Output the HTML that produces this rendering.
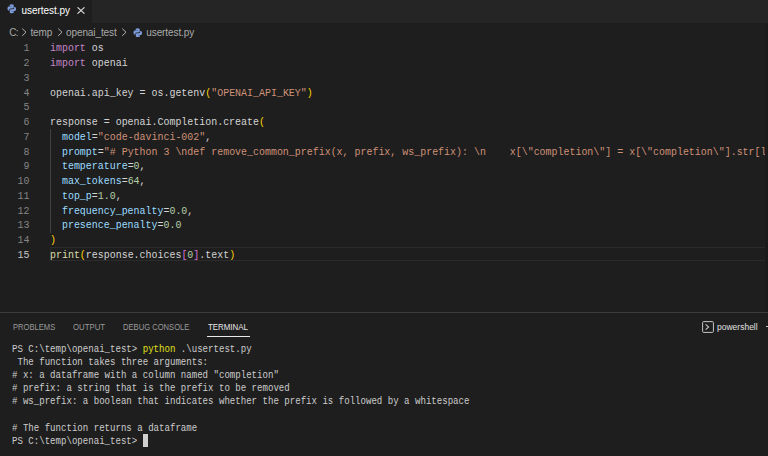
<!DOCTYPE html>
<html><head><meta charset="utf-8">
<style>
*{margin:0;padding:0;box-sizing:border-box}
html,body{width:768px;height:456px;overflow:hidden;background:#1e1e1e}
body{position:relative;font-family:"Liberation Sans",sans-serif}
.abs{position:absolute}
.ln{position:absolute;left:0;width:29.5px;text-align:right;font-family:"Liberation Mono",monospace;font-size:11px;line-height:14.76px;white-space:pre;transform:scaleX(0.9045);transform-origin:right}
.line{position:absolute;left:50.0px;font-family:"Liberation Mono",monospace;font-size:11px;line-height:14.76px;color:#d4d4d4;white-space:pre;transform:scaleX(0.9045);transform-origin:left}
.k{color:#c586c8}.s{color:#ce9178}.n{color:#b5cea8}.p{color:#9cdcfe}.f{color:#dcdcaa}.y{color:#ffd700}.m{color:#da70d6}
.ptab{position:absolute;top:319.5px;font-size:9px;line-height:14px;color:#9a9a9a;white-space:nowrap;transform-origin:left}
.term{position:absolute;left:12.3px;font-family:"Liberation Mono",monospace;font-size:10px;line-height:13.13px;color:#cccccc;white-space:pre;transform:scaleX(0.9075);transform-origin:left}
.yl{color:#e0e01c}
.crumb{position:absolute;top:26px;font-size:10px;line-height:13px;color:#a9a9a9;white-space:nowrap;letter-spacing:-0.1px}
</style></head><body>
<div class="abs" style="left:0;top:0;width:768px;height:23px;background:#252526"></div>
<div class="abs" style="left:0;top:0;width:92px;height:23px;background:#1e1e1e"></div>
<svg class="abs" style="left:7.2px;top:4.4px" width="9.5" height="9.5" viewBox="0 0 16 16"><path d="M7.9 0.5c-3.6 0-3.4 1.6-3.4 1.6v1.6h3.5v0.5H3.1S0.8 4 0.8 7.6s2 3.5 2 3.5h1.2V9.4s-0.1-2 2-2h3.4s1.9 0 1.9-1.9V2.4s0.3-1.9-3.4-1.9z" fill="#7d9cdb"/><path d="M8.1 15.5c3.6 0 3.4-1.6 3.4-1.6v-1.6H8v-0.5h4.9s2.3 0.3 2.3-3.3-2-3.5-2-3.5h-1.2v1.7s0.1 2-2 2H6.6s-1.9 0-1.9 1.9v3.1s-0.3 1.9 3.4 1.9z" fill="#7d9cdb"/></svg>
<div class="abs" style="left:21.5px;top:3.5px;font-size:10px;line-height:14px;color:#ffffff;white-space:nowrap;letter-spacing:-0.05px">usertest.py</div>
<svg class="abs" style="left:77px;top:7px" width="8" height="7" viewBox="0 0 8 7"><path d="M0.5 0.3L7.5 6.7M7.5 0.3L0.5 6.7" stroke="#d8d8d8" stroke-width="1.1"/></svg>

<div class="crumb" style="left:9.2px;letter-spacing:-0.6px">C:</div>
<svg class="abs" style="left:20.8px;top:27.6px" width="6" height="9" viewBox="0 0 6 9"><path d="M1.2 0.6L5 4.2L1.2 7.9" stroke="#b0b0b0" stroke-width="1" fill="none"/></svg>
<div class="crumb" style="left:30.4px">temp</div>
<svg class="abs" style="left:57px;top:27.6px" width="6" height="9" viewBox="0 0 6 9"><path d="M1.2 0.6L5 4.2L1.2 7.9" stroke="#b0b0b0" stroke-width="1" fill="none"/></svg>
<div class="crumb" style="left:66px">openai_test</div>
<svg class="abs" style="left:120.5px;top:27.6px" width="6" height="9" viewBox="0 0 6 9"><path d="M1.2 0.6L5 4.2L1.2 7.9" stroke="#b0b0b0" stroke-width="1" fill="none"/></svg>
<svg class="abs" style="left:132.6px;top:27.6px" width="9.5" height="9.5" viewBox="0 0 16 16"><path d="M7.9 0.5c-3.6 0-3.4 1.6-3.4 1.6v1.6h3.5v0.5H3.1S0.8 4 0.8 7.6s2 3.5 2 3.5h1.2V9.4s-0.1-2 2-2h3.4s1.9 0 1.9-1.9V2.4s0.3-1.9-3.4-1.9z" fill="#7d9cdb"/><path d="M8.1 15.5c3.6 0 3.4-1.6 3.4-1.6v-1.6H8v-0.5h4.9s2.3 0.3 2.3-3.3-2-3.5-2-3.5h-1.2v1.7s0.1 2-2 2H6.6s-1.9 0-1.9 1.9v3.1s-0.3 1.9 3.4 1.9z" fill="#7d9cdb"/></svg>
<div class="crumb" style="left:146.3px">usertest.py</div>

<div class="abs" style="left:50px;top:129px;width:1px;height:103.5px;background:#404040"></div>
<div class="abs" style="left:50px;top:247.2px;width:718px;height:14px;border:1px solid #2b2b2b;border-right:none"></div>
<div class="ln" style="top:41.30px;color:#858585">1</div>
<div class="line" style="top:41.30px"><span class="k">import</span> os</div>
<div class="ln" style="top:56.06px;color:#858585">2</div>
<div class="line" style="top:56.06px"><span class="k">import</span> openai</div>
<div class="ln" style="top:70.82px;color:#858585">3</div>
<div class="ln" style="top:85.58px;color:#858585">4</div>
<div class="line" style="top:85.58px">openai.api_key = os.getenv<span class="y">(</span><span class="s">"OPENAI_API_KEY"</span><span class="y">)</span></div>
<div class="ln" style="top:100.34px;color:#858585">5</div>
<div class="ln" style="top:115.10px;color:#858585">6</div>
<div class="line" style="top:115.10px">response = openai.Completion.create<span class="y">(</span></div>
<div class="ln" style="top:129.86px;color:#858585">7</div>
<div class="line" style="top:129.86px">  <span class="p">model</span>=<span class="s">"code-davinci-002"</span>,</div>
<div class="ln" style="top:144.62px;color:#858585">8</div>
<div class="line" style="top:144.62px">  <span class="p">prompt</span>=<span class="s">"# Python 3 \ndef remove_common_prefix(x, prefix, ws_prefix): \n    x[\"completion\"] = x[\"completion\"].str[len(prefix):]</span></div>
<div class="ln" style="top:159.38px;color:#858585">9</div>
<div class="line" style="top:159.38px">  <span class="p">temperature</span>=<span class="n">0</span>,</div>
<div class="ln" style="top:174.14px;color:#858585">10</div>
<div class="line" style="top:174.14px">  <span class="p">max_tokens</span>=<span class="n">64</span>,</div>
<div class="ln" style="top:188.90px;color:#858585">11</div>
<div class="line" style="top:188.90px">  <span class="p">top_p</span>=<span class="n">1.0</span>,</div>
<div class="ln" style="top:203.66px;color:#858585">12</div>
<div class="line" style="top:203.66px">  <span class="p">frequency_penalty</span>=<span class="n">0.0</span>,</div>
<div class="ln" style="top:218.42px;color:#858585">13</div>
<div class="line" style="top:218.42px">  <span class="p">presence_penalty</span>=<span class="n">0.0</span></div>
<div class="ln" style="top:233.18px;color:#858585">14</div>
<div class="line" style="top:233.18px"><span class="y">)</span></div>
<div class="ln" style="top:247.94px;color:#c6c6c6">15</div>
<div class="line" style="top:247.94px"><span class="f">print</span><span class="y">(</span>response.choices<span class="m">[</span><span class="n">0</span><span class="m">]</span>.text<span class="y">)</span></div>

<div class="abs" style="left:765px;top:23px;width:3px;height:289px;background:#1b1b1b"></div>
<div class="abs" style="left:0;top:312px;width:768px;height:1px;background:#3c3c3c"></div>
<div class="ptab" style="left:12.5px;transform:scaleX(0.845)">PROBLEMS</div>
<div class="ptab" style="left:72.5px;transform:scaleX(0.865)">OUTPUT</div>
<div class="ptab" style="left:123.3px;transform:scaleX(0.846)">DEBUG CONSOLE</div>
<div class="ptab" style="left:208.2px;transform:scaleX(0.877);color:#e7e7e7">TERMINAL</div>
<div class="abs" style="left:206.6px;top:336.3px;width:43.2px;height:1.2px;background:#e7e7e7"></div>
<svg class="abs" style="left:702px;top:321px" width="12" height="12" viewBox="0 0 12 12"><rect x="0.6" y="0.6" width="10.8" height="10.8" rx="1" stroke="#c5c5c5" stroke-width="1" fill="none"/><path d="M3.6 3.4L6.6 6L3.6 8.6" stroke="#c5c5c5" stroke-width="1.1" fill="none"/></svg>
<div class="abs" style="left:717px;top:320.5px;font-size:8.5px;line-height:12px;color:#e0e0e0;white-space:nowrap">powershell</div>
<div class="abs" style="left:766px;top:326px;width:3px;height:1px;background:#c5c5c5"></div>

<div class="term" style="top:342.90px">PS C:\temp\openai_test> <span class="yl">python</span> .\usertest.py</div>
<div class="term" style="top:356.03px"> The function takes three arguments:</div>
<div class="term" style="top:369.16px"># x: a dataframe with a column named &quot;completion&quot;</div>
<div class="term" style="top:382.29px"># prefix: a string that is the prefix to be removed</div>
<div class="term" style="top:395.42px"># ws_prefix: a boolean that indicates whether the prefix is followed by a whitespace</div>
<div class="term" style="top:421.68px"># The function returns a dataframe</div>
<div class="term" style="top:434.81px">PS C:\temp\openai_test> </div>
<div class="abs" style="left:142.8px;top:434.1px;width:5.5px;height:13.3px;background:#cfcfcf"></div>
</body></html>
